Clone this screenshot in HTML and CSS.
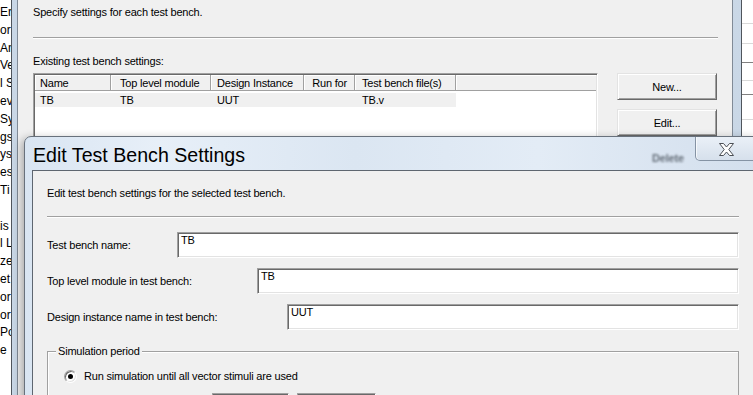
FILE: index.html
```html
<!DOCTYPE html>
<html lang="en">
<head>
    <meta charset="UTF-8">
    <title>Edit Test Bench Settings</title>
    <link rel="stylesheet" href="styles.css">
</head>
<body>
    <div class="desktop">
        <!-- window far behind, only its right edge shows -->
        <div class="win back-list">
            <div>Er</div><div>or</div><div>An</div><div>Ve</div><div>l S</div>
            <div>ev</div><div>Sy</div><div>gs</div><div>ys</div><div>es</div>
            <div>Ti</div><div>&nbsp;</div><div>is</div><div>l L</div><div>ze</div>
            <div>et</div><div>or</div><div>or</div><div>Po</div><div>e</div>
        </div>

        <div class="win main-win">
            <div class="client">
                <p class="txt">Specify settings for each test bench.</p>
                <div class="sep top-sep"></div>
                <p class="txt caption">Existing test bench settings:</p>
                <div class="bench-row">
                    <div class="listview">
                        <div class="lv-head">
                            <span class="col c-name">Name</span>
                            <span class="col c-top">Top level module</span>
                            <span class="col c-inst">Design Instance</span>
                            <span class="col c-run">Run for</span>
                            <span class="col c-file">Test bench file(s)</span>
                            <span class="col c-fill"></span>
                        </div>
                        <div class="lv-row">
                            <span class="col c-name">TB</span>
                            <span class="col c-top">TB</span>
                            <span class="col c-inst">UUT</span>
                            <span class="col c-run"></span>
                            <span class="col c-file">TB.v</span>
                        </div>
                    </div>
                    <div class="btn-col">
                        <button class="btn">New...</button>
                        <button class="btn">Edit...</button>
                    </div>
                </div>
            </div>
        </div>

        <div class="win side-win">
            <div class="srow s1"></div>
            <div class="srow s2"></div>
            <div class="srow s3 dark"></div>
            <div class="srow s4"></div>
            <div class="srow s5 dark"></div>
            <div class="srow s6"></div>
        </div>

        <div class="win dialog">
            <div class="titlebar">
                <span class="title">Edit Test Bench Settings</span>
                <span class="ghost">Delete</span>
                <button class="close" title="Close">
                    <svg width="17" height="15" viewBox="0 0 17 15">
                        <polygon points="1.5,1.5 5.5,1.5 8.5,5 11.5,1.5 15.5,1.5 10.8,7.5 15.5,13.5 11.5,13.5 8.5,10 5.5,13.5 1.5,13.5 6.2,7.5" fill="#fff" stroke="#4b4f55" stroke-width="1" stroke-linejoin="round"/>
                    </svg>
                </button>
            </div>
            <div class="dlg-client">
                <p class="txt">Edit test bench settings for the selected test bench.</p>
                <div class="sep dlg-sep"></div>

                <div class="field first">
                    <label class="lbl w-name">Test bench name:</label>
                    <div class="edit">TB</div>
                </div>
                <div class="field">
                    <label class="lbl w-top">Top level module in test bench:</label>
                    <div class="edit">TB</div>
                </div>
                <div class="field">
                    <label class="lbl w-inst">Design instance name in test bench:</label>
                    <div class="edit">UUT</div>
                </div>

                <fieldset class="group">
                    <legend>Simulation period</legend>
                    <div class="radio-row">
                        <span class="radio checked"></span>
                        <span class="radio-text">Run simulation until all vector stimuli are used</span>
                    </div>
                    <div class="time-row">
                        <span class="edit small a"></span>
                        <span class="edit small b"></span>
                    </div>
                </fieldset>
            </div>
        </div>
    </div>
</body>
</html>
```

FILE: styles.css
```css
* { box-sizing: border-box; }
body {
    margin: 0;
    font-family: "Liberation Sans", Arial, sans-serif;
    font-size: 11px;
    letter-spacing: -0.2px;
    color: #000;
    background: #fff;
    overflow: hidden;
}
.desktop {
    position: relative;
    width: 753px;
    height: 395px;
    overflow: hidden;
}
.win { position: absolute; }
.txt { margin: 0; line-height: 13px; white-space: nowrap; }

/* list window in the back */
.back-list {
    left: 0;
    top: 0;
    width: 11px;
    height: 395px;
    background: #fff;
    overflow: hidden;
    padding-top: 4px;
    font-size: 12px;
    letter-spacing: 0;
    line-height: 17.8px;
    white-space: nowrap;
}

/* parent dialog */
.main-win {
    left: 11px;
    top: 0;
    width: 731px;
    height: 395px;
    display: flex;
    border-left: 1px solid #4f555c;
    border-right: 1px solid #4f555c;
    padding: 0 8px 0 5px;
    background: linear-gradient(90deg, #c9d7e6, #e4ecf5 50%, #c9d7e6);
}
.main-win .client {
    flex: 1;
    background: #f0f0f0;
    border-left: 1px solid #808a96;
    border-right: 1px solid #808a96;
    padding: 6px 14px 0 15px;
}
.sep {
    height: 2px;
    border-top: 1px solid #a0a0a0;
    border-bottom: 1px solid #fff;
}
.top-sep { margin-top: 18px; }
.caption { margin-top: 16px; }
.bench-row {
    display: flex;
    gap: 19px;
    margin-top: 5px;
}
.listview {
    width: 565px;
    height: 95px;
    background: #fff;
    padding: 1px;
    border: 1px solid;
    border-color: #a0a0a0 #fff #fff #a0a0a0;
    box-shadow: inset 1px 1px #696969, inset -1px -1px #e3e3e3;
}
.lv-head, .lv-row { display: flex; }
.lv-head .col {
    height: 16px;
    padding-top: 2px;
    line-height: 13px;
    background: #f0f0f0;
    border-right: 1px solid #a0a0a0;
    border-bottom: 1px solid #a0a0a0;
    box-shadow: inset 1px 1px #fff;
}
.lv-row {
    margin-top: 2px;
    width: 421px;
    height: 14px;
    line-height: 14px;
    background: #f0f0f0;
}
.col { white-space: nowrap; overflow: hidden; }
.c-name { width: 76px; padding-left: 5px; }
.c-top { width: 100px; padding-left: 9px; }
.c-inst { width: 93px; padding-left: 6px; }
.c-run { width: 51px; padding-right: 7px; text-align: right; }
.c-file { width: 101px; padding-left: 7px; }
.lv-head .c-fill { flex: 1; border-right: none; }
.btn-col {
    display: flex;
    flex-direction: column;
    gap: 9px;
}
.btn {
    width: 100px;
    height: 27px;
    padding: 0;
    font: inherit;
    letter-spacing: inherit;
    color: #000;
    background: #f0f0f0;
    border: 1px solid;
    border-color: #e3e3e3 #696969 #696969 #e3e3e3;
    box-shadow: inset 1px 1px #fff, inset -1px -1px #a0a0a0;
}

/* window peeking in on the right */
.side-win {
    left: 742px;
    top: 0;
    width: 11px;
    height: 395px;
    background: #fff;
}
.srow { border-bottom: 1px solid #d9d9d9; }
.srow.dark { border-bottom-color: #808080; }
.s1 { height: 24px; }
.s2 { height: 20px; }
.s3 { height: 19px; }
.s4 { height: 18px; }
.s5 { height: 14px; }
.s6 { height: 25px; }

/* Edit Test Bench Settings dialog */
.dialog {
    left: 24px;
    top: 136px;
    width: 735px;
    height: 300px;
    display: flex;
    flex-direction: column;
    border: 1px solid #68717c;
    border-top-left-radius: 7px;
    background: linear-gradient(90deg, #d9e5f2 0%, #e7eff8 18%, #dbe6f2 45%, #e3ecf6 70%, #d3dfed 100%);
    box-shadow: -3px 2px 8px rgba(0, 0, 0, 0.28);
}
.titlebar {
    position: relative;
    display: flex;
    align-items: flex-start;
    height: 33px;
    padding-left: 8px;
}
.title {
    margin-top: 8px;
    font-size: 19.6px;
    letter-spacing: 0;
    line-height: 21px;
    white-space: nowrap;
}
.ghost {
    position: absolute;
    left: 627px;
    top: 15px;
    font-weight: bold;
    color: rgba(50, 58, 68, 0.7);
    filter: blur(1.3px);
}
.close {
    margin-left: auto;
    margin-right: 1px;
    width: 62px;
    height: 24px;
    padding: 0;
    display: flex;
    align-items: center;
    justify-content: center;
    border: 1px solid #8593a4;
    border-top: none;
    border-radius: 0 0 5px 5px;
    background: linear-gradient(#eaf0f7, #d6e0ec);
    box-shadow: inset 1px 0 rgba(255, 255, 255, 0.7);
}
.close svg { display: block; margin-top: 1px; }
.dlg-client {
    flex: 1;
    margin-left: 7px;
    background: #f0f0f0;
    border-top: 1px solid #5e6670;
    border-left: 1px solid #5e6670;
    padding: 16px 19px 0 14px;
}
.dlg-sep { margin-top: 16px; }
.field {
    display: flex;
    align-items: center;
    height: 26px;
    margin-top: 10px;
}
.field.first { margin-top: 14px; }
.lbl { flex: none; white-space: nowrap; }
.w-name { width: 130px; }
.w-top { width: 210px; }
.w-inst { width: 240px; }
.edit {
    display: block;
    flex: 1;
    height: 26px;
    padding: 1px 3px;
    line-height: 13px;
    background: #fff;
    border: 1px solid;
    border-color: #a0a0a0 #fff #fff #a0a0a0;
    box-shadow: inset 1px 1px #696969, inset -1px -1px #e3e3e3;
}
.group {
    margin: 15px 0 0;
    padding: 0 0 0 8px;
    border: 1px solid #a0a0a0;
    box-shadow: inset 1px 1px #fff;
}
.group legend {
    padding: 0 2px;
    line-height: 13px;
    background: #f0f0f0;
}
.radio-row {
    display: flex;
    align-items: center;
    height: 13px;
    margin-top: 12px;
}
.radio {
    position: relative;
    width: 13px;
    height: 13px;
    margin-left: 8px;
    border-radius: 50%;
    background: #fff;
    border: 1px solid;
    border-color: #a0a0a0 #fff #fff #a0a0a0;
    box-shadow: inset 1px 1px #696969, inset -1px -1px #e3e3e3;
}
.radio.checked::after {
    content: "";
    position: absolute;
    left: 3px;
    top: 3px;
    width: 5px;
    height: 5px;
    border-radius: 50%;
    background: #000;
}
.radio-text { margin-left: 7px; line-height: 13px; white-space: nowrap; }
.time-row {
    display: flex;
    margin-top: 10px;
}
.edit.small { flex: none; height: 22px; }
.edit.a { width: 77px; margin-left: 156px; }
.edit.b { width: 79px; margin-left: 8px; }
```
